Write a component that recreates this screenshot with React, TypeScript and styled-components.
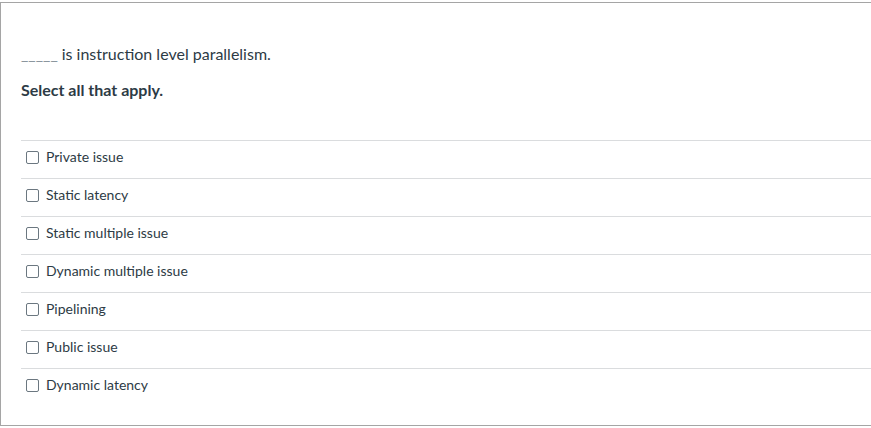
import styled, { createGlobalStyle } from "styled-components";

const GlobalStyle = createGlobalStyle`
  html, body {
    margin: 0;
    padding: 0;
    background: #ffffff;
  }
  body {
    font-family: Lato, "Liberation Sans", sans-serif;
    color: #2d3b45;
  }
`;

const Page = styled.div`
  padding-top: 2px;
  width: 871px;
  height: 428px;
  box-sizing: border-box;
  overflow: hidden;
`;

const Card = styled.div`
  width: 900px;
  height: 424px;
  box-sizing: border-box;
  border: 1px solid #a5a5a5;
  border-right: none;
  padding: 39px 0 0 20px;
`;

const Question = styled.p`
  margin: 0;
  font-size: 16px;
  line-height: 24px;
`;

const Blank = styled.span`
  color: #8b969e;
  margin-right: 4px;
`;

const Instruction = styled.p`
  margin: 12px 0 0;
  font-size: 16px;
  line-height: 24px;
  font-weight: 700;
`;

const Options = styled.ul`
  list-style: none;
  margin: 38px 0 0;
  padding: 0;
`;

const Option = styled.li`
  display: flex;
  align-items: center;
  gap: 7px;
  height: 38px;
  box-sizing: border-box;
  border-top: 1px solid #dadcde;
  padding: 0 0 7px 5px;
  font-size: 14px;
`;

const Box = styled.span`
  width: 11px;
  height: 11px;
  border: 1px solid #6b7780;
  border-radius: 2px;
  background: #fff;
  flex-shrink: 0;
  margin-top: 3px;
`;

const options = [
  "Private issue",
  "Static latency",
  "Static multiple issue",
  "Dynamic multiple issue",
  "Pipelining",
  "Public issue",
  "Dynamic latency",
];

export default function App() {
  return (
    <>
      <GlobalStyle />
      <Page>
        <Card>
          <Question>
            <Blank>_____</Blank>is instruction level parallelism.
          </Question>
          <Instruction>Select all that apply.</Instruction>
          <Options>
            {options.map((o) => (
              <Option key={o}>
                <Box />
                {o}
              </Option>
            ))}
          </Options>
        </Card>
      </Page>
    </>
  );
}
